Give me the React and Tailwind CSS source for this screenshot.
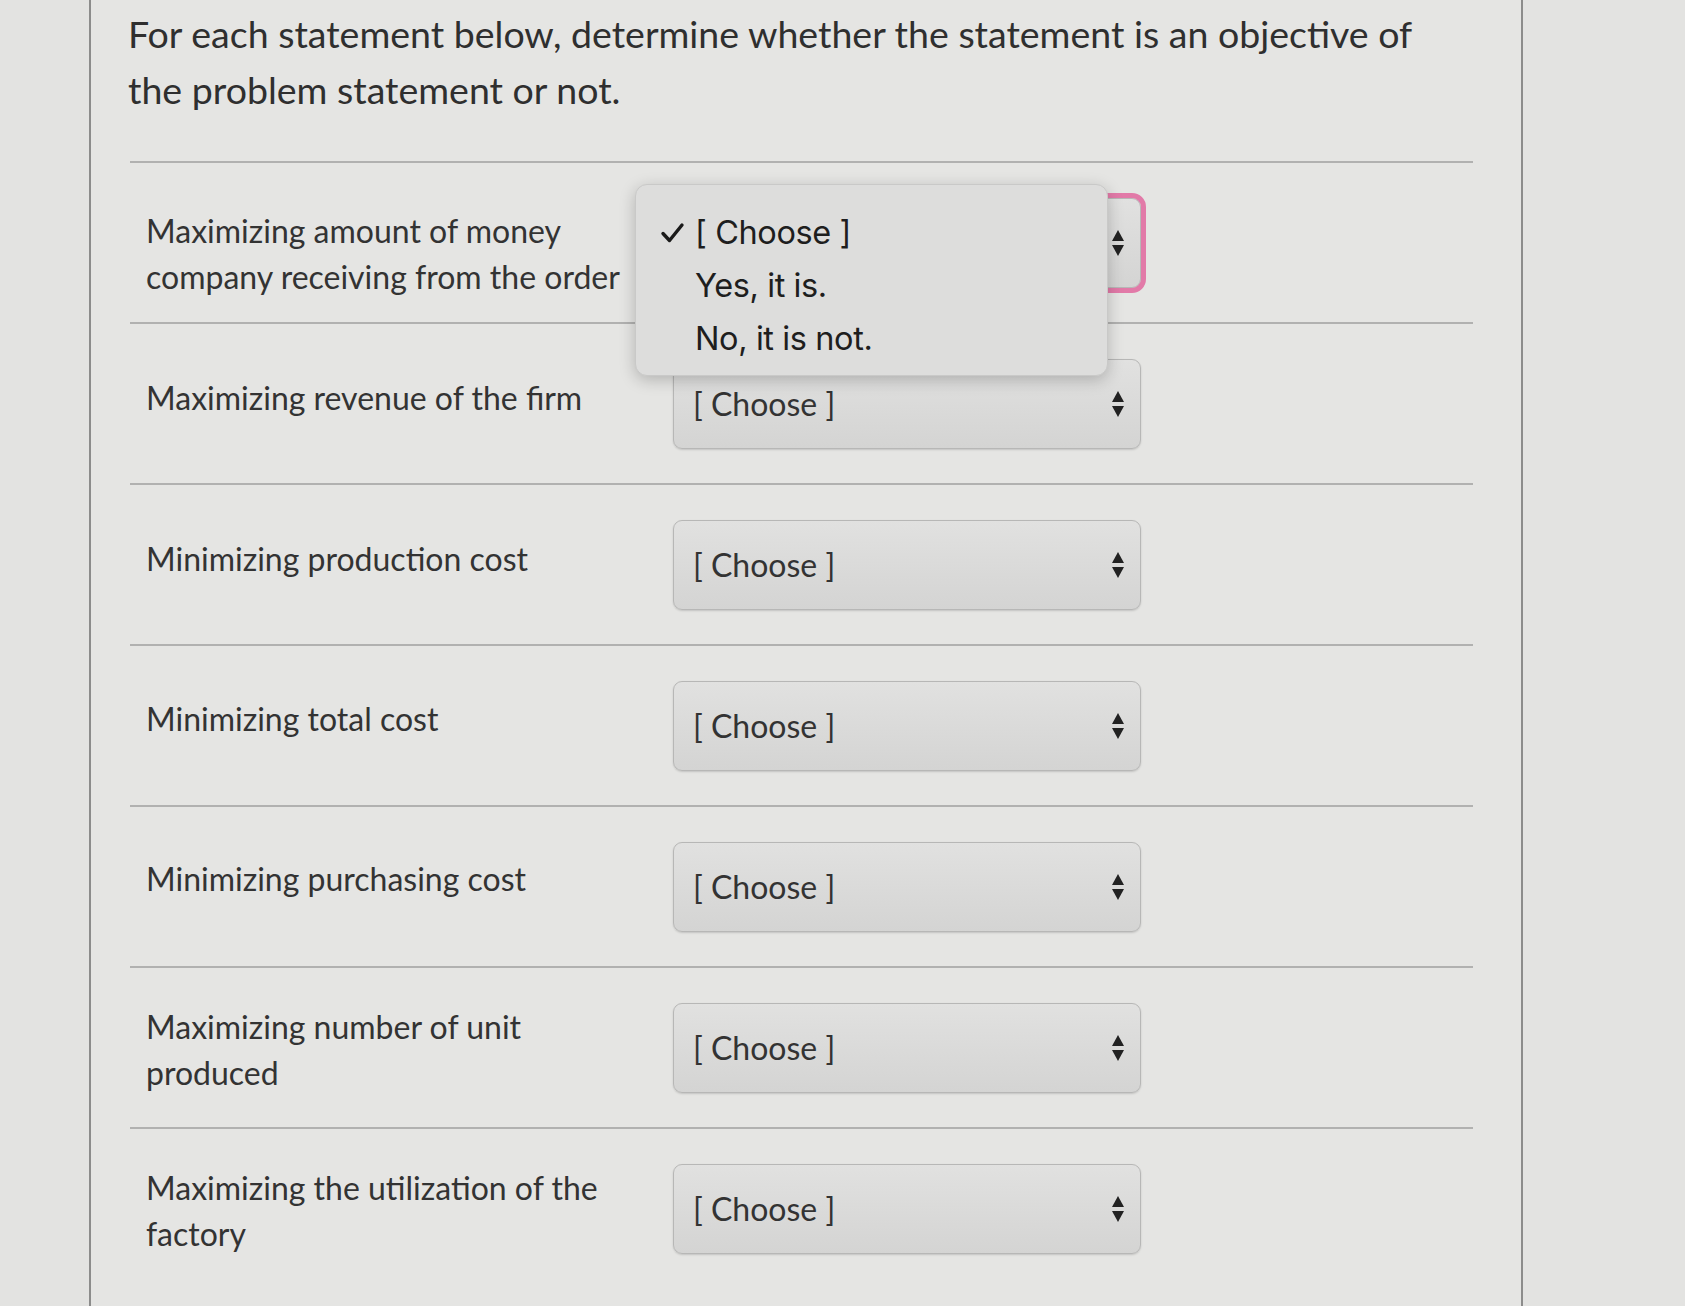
import React from 'react';

const rows = [
  { label: ['Maximizing amount of money', 'company receiving from the order'], open: true, pt: 'pt-[22px]' },
  { label: ['Maximizing revenue of the firm'], pt: 'pb-[12px]' },
  { label: ['Minimizing production cost'], pt: 'pb-[12px]' },
  { label: ['Minimizing total cost'], pt: 'pb-[14px]' },
  { label: ['Minimizing purchasing cost'], pt: 'pb-[16px]' },
  { label: ['Maximizing number of unit', 'produced'], pt: 'pt-[4px]' },
  { label: ['Maximizing the utilization of the', 'factory'], pt: 'pt-[4px]' },
];

const options = ['[ Choose ]', 'Yes, it is.', 'No, it is not.'];

function Arrows() {
  return (
    <svg width="14" height="30" viewBox="0 0 14 30" className="shrink-0">
      <path d="M7 2 L13 13 H1 Z" fill="#222" />
      <path d="M7 28 L13 17 H1 Z" fill="#222" />
    </svg>
  );
}

function Check() {
  return (
    <svg width="25" height="22" viewBox="0 0 25 22" className="shrink-0">
      <path d="M3 11.5 L9.5 18.5 L22 3" fill="none" stroke="#1a1a1a" strokeWidth="3.4" strokeLinecap="round" strokeLinejoin="round" />
    </svg>
  );
}

function SelectBox({ open }) {
  return (
    <div className="relative">
      <div
        className={
          'flex h-[90px] w-[468px] items-center justify-between rounded-[9px] border border-[#b7b7b6] bg-gradient-to-b from-[#e1e1e0] to-[#d4d4d3] pl-[19px] pr-[15px] shadow-[0_1px_2px_rgba(0,0,0,0.15)] ' +
          (open ? 'outline-[5px] outline-solid outline-[#e27aa8]' : '')
        }
      >
        <span className={'text-[32px] leading-none text-[#333] ' + (open ? 'invisible' : '')}>[ Choose ]</span>
        <Arrows />
      </div>

      {open && (
        <div className="absolute left-[-38px] top-[-14px] z-10 h-[192px] w-[473px] rounded-[12px] border border-[#c9c9c8] bg-[#dddddc] pt-[22px] shadow-[0_4px_16px_rgba(0,0,0,0.22)]">
          {options.map((o, i) => (
            <div key={o} className="flex h-[53px] items-center">
              <div className="flex w-[59px] justify-end pr-[10px]">{i === 0 && <Check />}</div>
              <span className="text-[32.5px] leading-none text-[#1e1e1e] font-['Inter',sans-serif] tracking-[-0.4px]">{o}</span>
            </div>
          ))}
        </div>
      )}
    </div>
  );
}

export default function App() {
  return (
    <div className="flex h-[1306px] w-[1685px] overflow-hidden bg-[#e3e3e1] font-['Lato',sans-serif] text-[#333]">
      <div className="w-[89px] shrink-0" />

      <div className="w-[1434px] shrink-0 border-x-2 border-[#8c8c8b] bg-[#e5e5e3]">
        <div className="pl-[37px] pt-[6px] text-[37.5px] leading-[56px] text-[#2f2f2f]">
          <div className="whitespace-nowrap">For each statement below, determine whether the statement is an objective of</div>
          <div>the problem statement or not.</div>
        </div>

        <div className="ml-[39px] mt-[43px] w-[1343px]">
          {rows.map((r, i) => (
            <div key={i} className="flex h-[161px] items-center border-t-2 border-[#b1b1b0]">
              <div className={'w-[543px] shrink-0 pl-[16px] text-[32px] leading-[46px] text-[#333] ' + r.pt}>
                {r.label.map((l) => (
                  <div key={l} className="whitespace-nowrap">{l}</div>
                ))}
              </div>
              <SelectBox open={r.open} />
            </div>
          ))}
        </div>
      </div>

      <div className="flex-1" />
    </div>
  );
}
